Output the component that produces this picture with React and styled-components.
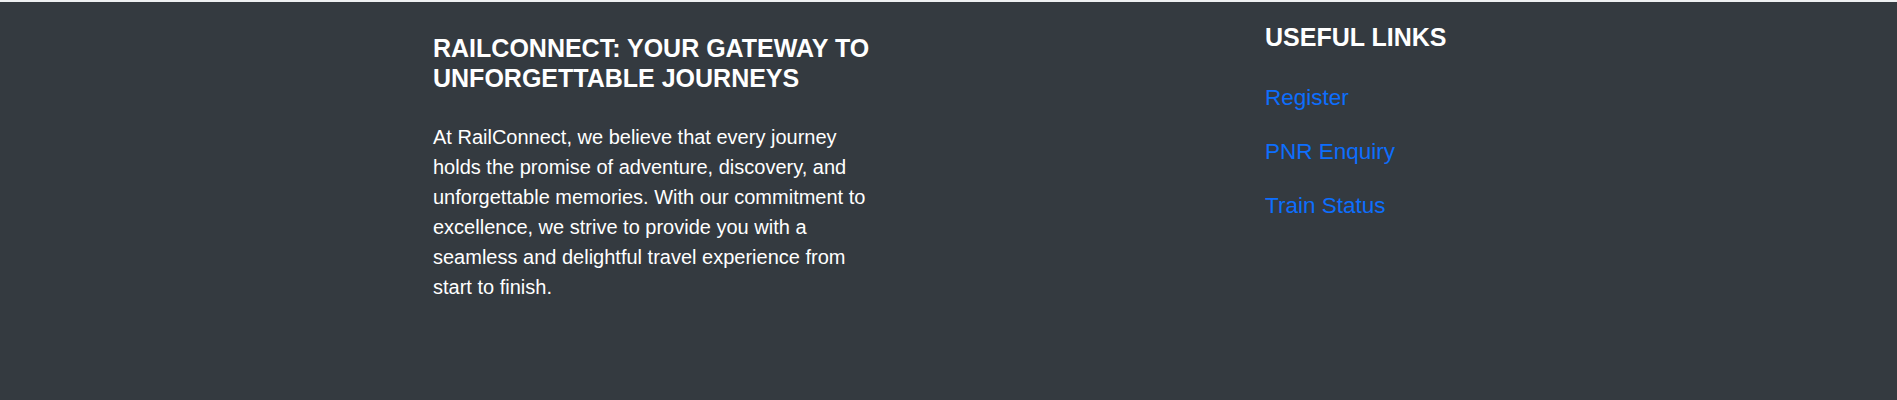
import styled, { createGlobalStyle } from "styled-components";

const GlobalStyle = createGlobalStyle`
  html, body {
    margin: 0;
    padding: 0;
    background: #343a40;
  }
  body {
    font-family: "Liberation Sans", Arial, sans-serif;
  }
`;

const Footer = styled.footer`
  min-height: 100vh;
  box-sizing: border-box;
  background: #343a40;
  border-top: 2px solid #eef0f2;
  padding: 20px 0 40px 433px;
  display: flex;
  align-items: flex-start;
  gap: 387px;
  color: #fff;
`;

const AboutCol = styled.section`
  width: 445px;
  padding-top: 11px;
`;

const LinksCol = styled.nav`
  display: flex;
  flex-direction: column;
`;

const Heading = styled.h5`
  margin: 0 0 29px;
  font-size: 25px;
  line-height: 30px;
  font-weight: 700;
  text-transform: uppercase;
  color: #fff;
`;

const Text = styled.p`
  margin: 0;
  font-size: 20px;
  line-height: 30px;
  color: #fff;
`;

const LinkList = styled.ul`
  list-style: none;
  margin: 0;
  padding: 0;
  display: flex;
  flex-direction: column;
  gap: 20px;
`;

const FooterLink = styled.a`
  font-size: 22.5px;
  line-height: 1.5;
  color: #0d6efd;
  text-decoration: none;
`;

const links = ["Register", "PNR Enquiry", "Train Status"];

export default function App() {
  return (
    <>
      <GlobalStyle />
      <Footer>
        <AboutCol>
          <Heading>RailConnect: Your Gateway to Unforgettable Journeys</Heading>
          <Text>
            At RailConnect, we believe that every journey holds the promise of
            adventure, discovery, and unforgettable memories. With our
            commitment to excellence, we strive to provide you with a seamless
            and delightful travel experience from start to finish.
          </Text>
        </AboutCol>
        <LinksCol>
          <Heading>Useful Links</Heading>
          <LinkList>
            {links.map((label) => (
              <li key={label}>
                <FooterLink href="#">{label}</FooterLink>
              </li>
            ))}
          </LinkList>
        </LinksCol>
      </Footer>
    </>
  );
}
